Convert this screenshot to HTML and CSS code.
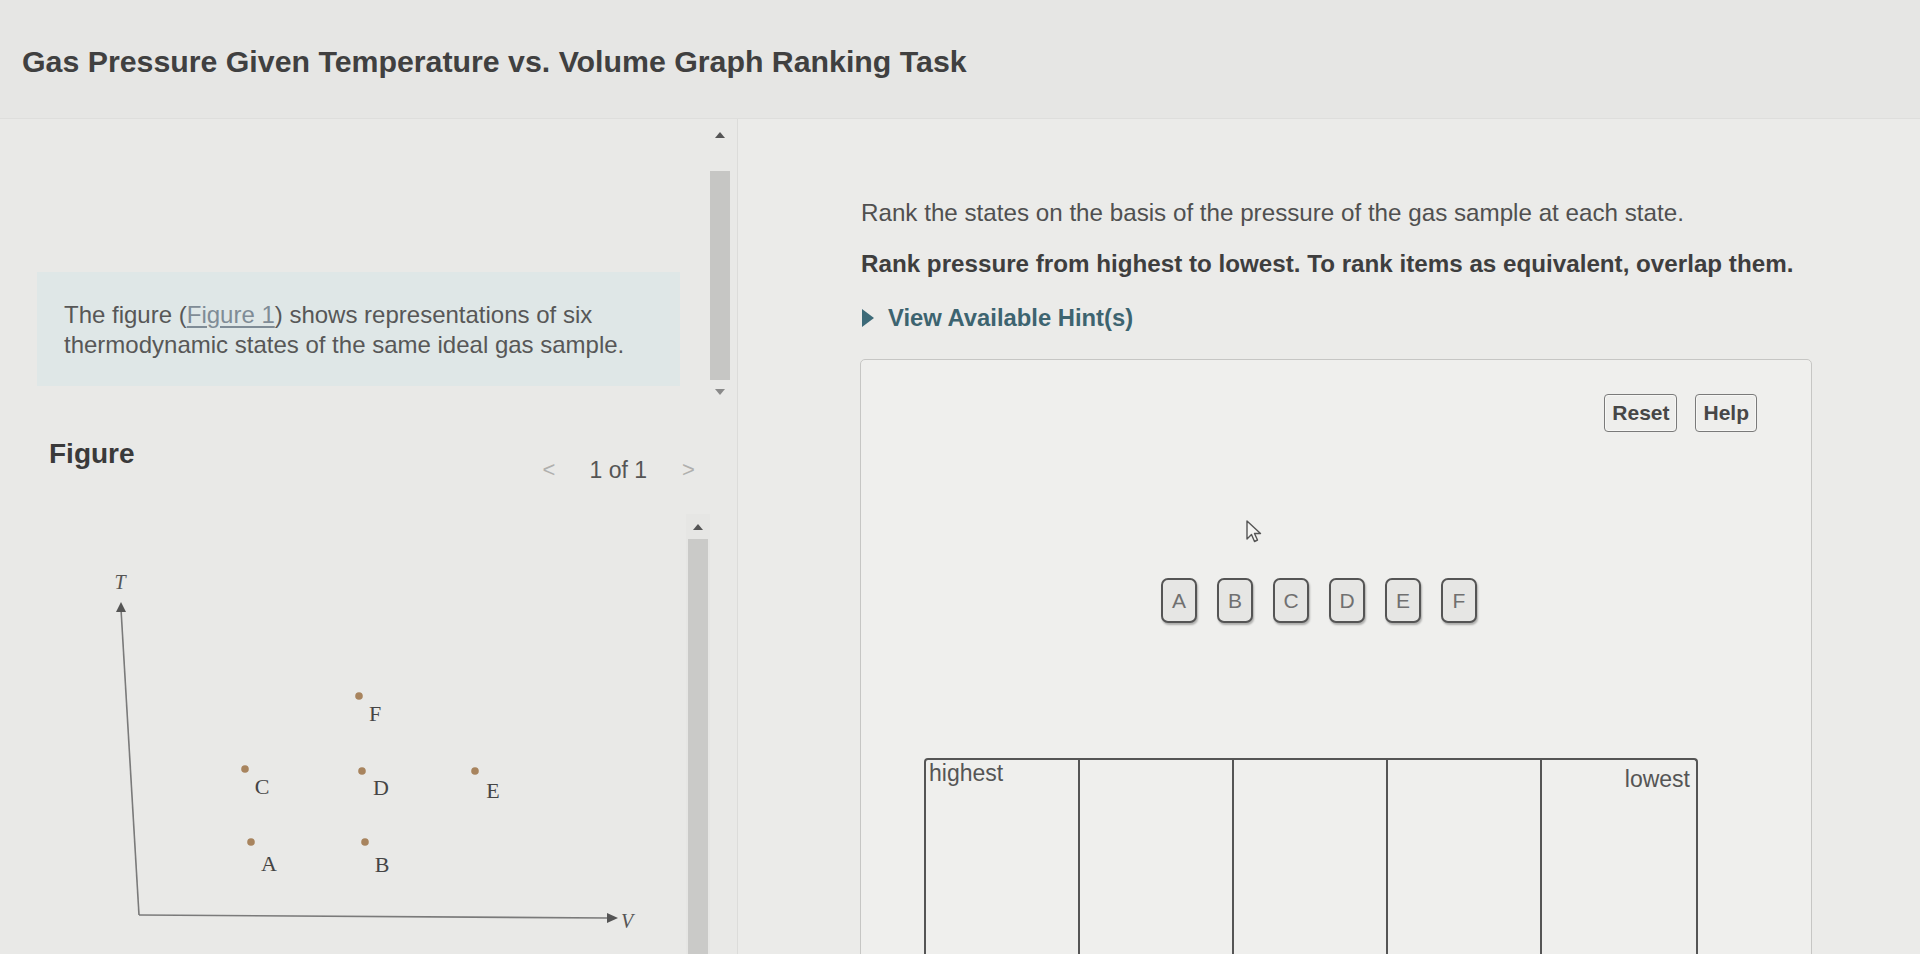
FILE: index.html
```html
<!DOCTYPE html>
<html lang="en">
<head>
<meta charset="utf-8">
<title>Gas Pressure Given Temperature vs. Volume Graph Ranking Task</title>
<link rel="stylesheet" href="styles.css">
</head>
<body>
<div class="page">
  <header class="title-bar">
    <h1 class="title">Gas Pressure Given Temperature vs. Volume Graph Ranking Task</h1>
  </header>
  <div class="main">
    <aside class="left">
      <div class="intro-pane">
        <div class="intro-content">
          <div class="intro-box">
            <p class="intro-text">The figure (<a class="fig-link" href="#">Figure 1</a>) shows representations of six<br>thermodynamic states of the same ideal gas sample.</p>
          </div>
        </div>
        <div class="scrollbar sb1">
          <span class="arrow-up"></span>
          <span class="thumb thumb1"></span>
          <span class="arrow-down"></span>
        </div>
      </div>
      <div class="figure-head">
        <h2 class="figure-title">Figure</h2>
        <div class="pager">
          <span class="chev">&lt;</span>
          <span class="pager-text">1 of 1</span>
          <span class="chev">&gt;</span>
        </div>
      </div>
      <div class="figure-pane">
        <div class="figure-content">
          <svg class="graph" width="686" height="440" viewBox="0 0 686 440">
            <text x="120" y="75" class="axis-label" text-anchor="middle">T</text>
            <line x1="121" y1="95" x2="139" y2="401" class="axis"/>
            <polygon points="121,88 116,98 126,98" class="axis-head"/>
            <line x1="139" y1="401" x2="608" y2="404" class="axis"/>
            <polygon points="618,404 607,399 607,409" class="axis-head"/>
            <text x="627" y="414" class="axis-label" text-anchor="middle">V</text>
            <circle cx="359" cy="182" r="3.8" class="dot"/>
            <circle cx="245" cy="255" r="3.8" class="dot"/>
            <circle cx="362" cy="257" r="3.8" class="dot"/>
            <circle cx="475" cy="257" r="3.8" class="dot"/>
            <circle cx="251" cy="328" r="3.8" class="dot"/>
            <circle cx="365" cy="328" r="3.8" class="dot"/>
            <text x="375" y="207" class="pt-label" text-anchor="middle">F</text>
            <text x="262" y="280" class="pt-label" text-anchor="middle">C</text>
            <text x="381" y="281" class="pt-label" text-anchor="middle">D</text>
            <text x="493" y="284" class="pt-label" text-anchor="middle">E</text>
            <text x="269" y="357" class="pt-label" text-anchor="middle">A</text>
            <text x="382" y="358" class="pt-label" text-anchor="middle">B</text>
          </svg>
        </div>
        <div class="scrollbar sb2">
          <span class="arrow-up"></span>
          <span class="thumb thumb2"></span>
        </div>
      </div>
    </aside>
    <section class="right">
      <p class="prompt">Rank the states on the basis of the pressure of the gas sample at each state.</p>
      <p class="instruction">Rank pressure from highest to lowest. To rank items as equivalent, overlap them.</p>
      <div class="hint"><span class="hint-tri"></span><span class="hint-text">View Available Hint(s)</span></div>
      <div class="rank-box">
        <div class="toolbar">
          <button class="btn" type="button">Reset</button>
          <button class="btn" type="button">Help</button>
        </div>
        <div class="tiles">
          <span class="tile">A</span>
          <span class="tile">B</span>
          <span class="tile">C</span>
          <span class="tile">D</span>
          <span class="tile">E</span>
          <span class="tile">F</span>
        </div>
        <div class="bins">
          <div class="bin"><span class="bin-label">highest</span></div>
          <div class="bin"></div>
          <div class="bin"></div>
          <div class="bin"></div>
          <div class="bin bin-last"><span class="bin-label-right">lowest</span></div>
        </div>
        <svg class="cursor" width="20" height="26" viewBox="0 0 20 26">
          <path d="M2 2 L2 20 L6.5 15.5 L9.5 22.5 L12.5 21 L9.5 14.5 L15.5 14.5 Z" fill="#f4f4f2" stroke="#555" stroke-width="1.4" stroke-linejoin="round"/>
        </svg>
      </div>
    </section>
  </div>
</div>
</body>
</html>
```
FILE: styles.css
```css
* { box-sizing: border-box; }
html, body { margin: 0; padding: 0; }
body {
  width: 1920px;
  height: 954px;
  overflow: hidden;
  background: #e9e9e7;
  font-family: "Liberation Sans", Arial, sans-serif;
  color: #4a4a4a;
}
.page { width: 1920px; height: 954px; display: flex; flex-direction: column; }

.title-bar {
  height: 119px;
  flex: 0 0 119px;
  display: flex;
  align-items: center;
  padding: 5px 0 0 22px;
  background: #e6e6e4;
  border-bottom: 1px solid #dededc;
}
.title {
  margin: 0;
  font-size: 30.3px;
  line-height: 36px;
  font-weight: 700;
  color: #404040;
}

.main { flex: 1; display: flex; min-height: 0; }

.left {
  width: 738px;
  flex: 0 0 738px;
  display: flex;
  flex-direction: column;
  background: #e9e9e7;
  border-right: 1px solid #dcdcda;
}

.intro-pane { height: 286px; flex: 0 0 286px; display: flex; }
.intro-content { width: 708px; padding: 153px 0 0 37px; }
.intro-box {
  width: 643px;
  height: 114px;
  background: #dfe7e7;
  padding: 28px 0 0 27px;
}
.intro-text {
  margin: 0;
  font-size: 24px;
  line-height: 30px;
  color: #575757;
}
.fig-link { color: #7f8c96; text-decoration: underline; text-underline-offset: 3px; }

.scrollbar {
  width: 24px;
  display: flex;
  flex-direction: column;
  align-items: center;
}
.sb1 { padding-top: 13px; }
.sb2 { padding-top: 10px; background: #e6e6e4; }
.arrow-up {
  width: 0; height: 0;
  border-left: 5px solid transparent;
  border-right: 5px solid transparent;
  border-bottom: 6px solid #555;
}
.arrow-down {
  width: 0; height: 0;
  border-left: 5px solid transparent;
  border-right: 5px solid transparent;
  border-top: 6px solid #8a8a8a;
  margin-top: 9px;
}
.thumb { width: 20px; background: #c6c6c4; }
.thumb1 { height: 209px; margin-top: 33px; }
.thumb2 { flex: 1; margin-top: 9px; background: #cacac8; }

.figure-head {
  height: 109px;
  flex: 0 0 109px;
  display: flex;
  align-items: flex-start;
  padding: 0 45px 0 49px;
}
.figure-title {
  margin: 32px 0 0 0;
  font-size: 28px;
  line-height: 34px;
  font-weight: 700;
  color: #3a3a3a;
}
.pager {
  margin-left: auto;
  margin-top: 51px;
  display: flex;
  align-items: center;
  font-size: 23px;
  line-height: 28px;
  color: #555;
}
.chev { color: #b0b0ae; font-size: 22px; width: 10px; }
.pager-text { margin: 0 35px 0 37px; }

.figure-pane { flex: 1; display: flex; min-height: 0; }
.figure-content { width: 686px; }
.graph { display: block; }
.axis { stroke: #7a7a7a; stroke-width: 1.6; }
.axis-head { fill: #555; }
.axis-label { font-family: "Liberation Serif", "Times New Roman", serif; font-style: italic; font-size: 20px; fill: #555; }
.dot { fill: #a8845e; }
.pt-label { font-family: "Liberation Serif", "Times New Roman", serif; font-size: 22px; fill: #454545; }

.right {
  flex: 1;
  background: #ebebe9;
  padding: 79px 0 0 123px;
}
.prompt, .instruction {
  margin: 0;
  font-size: 24.2px;
  line-height: 30px;
  color: #505050;
}
.instruction { margin-top: 21px; font-weight: 700; color: #3e3e3e; }
.hint {
  margin-top: 24px;
  display: flex;
  align-items: center;
  height: 30px;
}
.hint-tri {
  width: 0; height: 0;
  margin-left: 1px;
  border-top: 9px solid transparent;
  border-bottom: 9px solid transparent;
  border-left: 12px solid #3c6a78;
}
.hint-text {
  margin-left: 14px;
  font-size: 23.8px;
  font-weight: 700;
  color: #3d6470;
}

.rank-box {
  position: relative;
  margin: 26px 0 0 -1px;
  width: 952px;
  height: 640px;
  border: 1px solid #c6c6c4;
  border-radius: 5px;
  background: #efefed;
  padding-top: 34px;
}
.toolbar {
  display: flex;
  justify-content: flex-end;
  gap: 18px;
  padding-right: 54px;
}
.btn {
  height: 38px;
  padding: 0 7px;
  border: 1.5px solid #7a7a7a;
  border-radius: 4px;
  background: #eeeeec;
  font-family: "Liberation Sans", Arial, sans-serif;
  font-size: 21px;
  font-weight: 700;
  color: #474747;
  box-shadow: inset 0 0 0 1px #f7f7f5;
}
.tiles {
  display: flex;
  gap: 20px;
  margin-top: 146px;
  padding-left: 300px;
}
.tile {
  width: 36px;
  height: 45px;
  border: 2.5px solid #555;
  border-radius: 7px;
  background: #e6e6e4;
  box-shadow: 1px 2px 2px rgba(0, 0, 0, 0.28);
  display: flex;
  align-items: center;
  justify-content: center;
  font-size: 21px;
  color: #707070;
}
.bins {
  margin: 135px 0 0 63px;
  width: 774px;
  height: 220px;
  display: grid;
  grid-template-columns: repeat(5, 1fr);
  border: 2px solid #555;
  border-bottom: none;
  border-radius: 4px 4px 0 0;
}
.bin { border-right: 2px solid #555; position: relative; }
.bin-last { border-right: none; }
.bin-label {
  display: inline-block;
  margin: 0 0 0 3px;
  font-size: 23px;
  line-height: 26px;
  color: #555;
}
.bin-label-right {
  position: absolute;
  right: 6px;
  top: 6px;
  font-size: 23px;
  line-height: 26px;
  color: #555;
}
.cursor { position: absolute; left: 384px; top: 159px; }
```
